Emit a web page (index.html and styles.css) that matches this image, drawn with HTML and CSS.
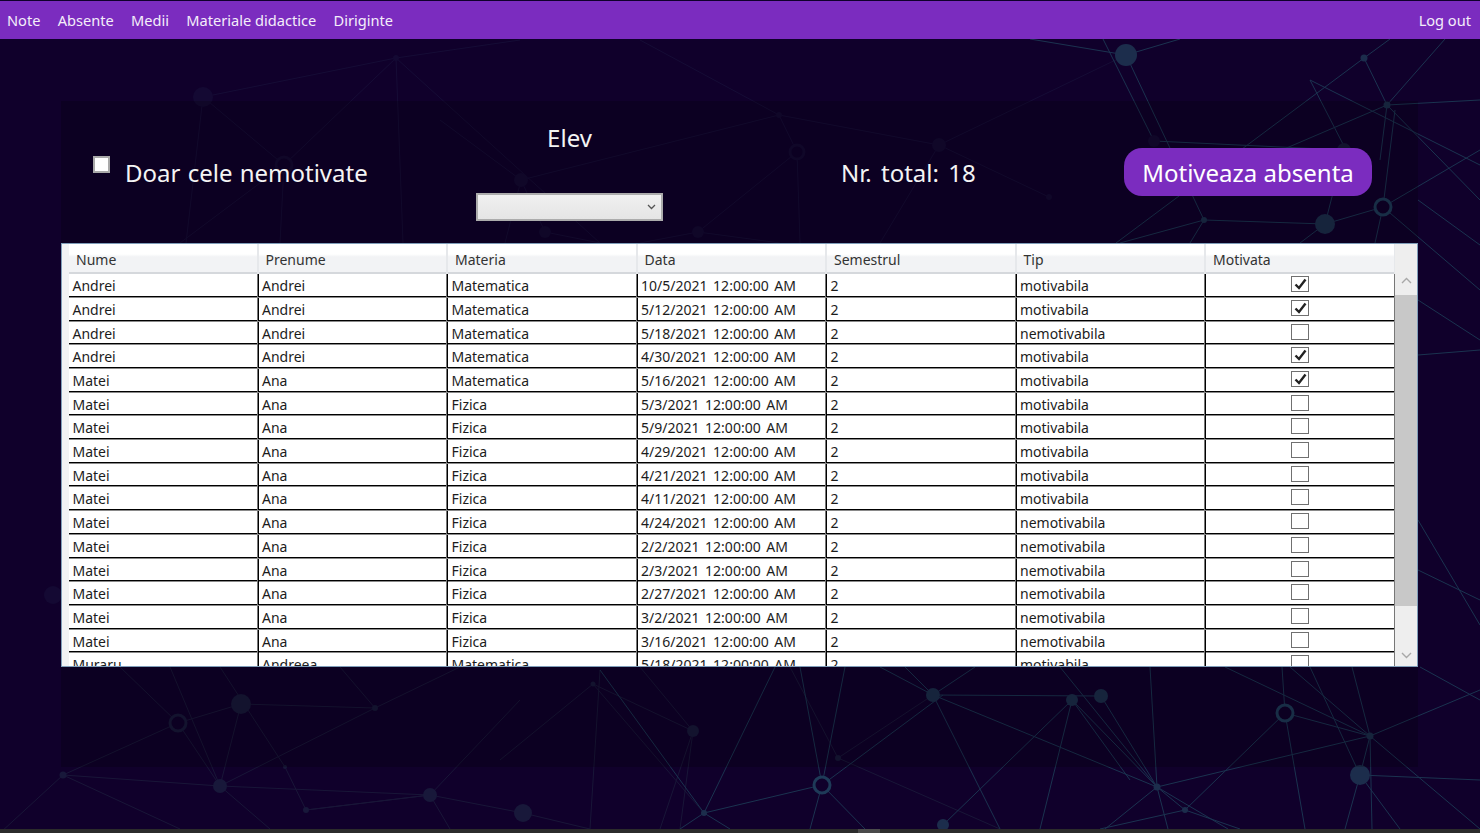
FILE: index.html
```html
<!DOCTYPE html>
<html lang="en">
  <head>
    <meta charset="UTF-8" />
    <meta name="viewport" content="width=device-width, initial-scale=1.0" />
    <title>Absente</title>
    <link rel="stylesheet" href="styles.css">
  </head>
  <body>
    <!-- network picture behind the page -->
    <svg class="network" width="1480" height="833" viewBox="0 0 1480 833">
      <g class="links-faint">
        <path d="M396 58 L203 97 M396 58 L284 165 M396 58 L520 40 M203 97 L284 165 M203 97 L186 243 M396 58 L403 243 M396 58 L600 243 M284 165 L280 243 M284 165 L180 243"/>
        <path d="M779 115 L521 180 M779 115 L797 152 M779 115 L939 145 M779 115 L640 40 M797 152 L698 232 M797 152 L800 243 M521 180 L545 232 M521 180 L440 120 M521 180 L505 243 M698 232 L640 243 M698 232 L780 243 M545 232 L600 243 M939 145 L1049 197 M939 145 L1126 55 M939 145 L880 243"/>
      </g>
      <g class="links-dim">
        <path d="M178 723 L241 704 M178 723 L63 775 M178 723 L220 786 M241 704 L375 708 M241 704 L220 786 M375 708 L460 667 M375 708 L340 667 M220 786 L375 708 M220 786 L430 795 M63 775 L220 786 M63 775 L0 833 M63 775 L180 829 M220 786 L270 829 M220 786 L170 667 M430 795 L520 700 M430 795 L306 810 M430 795 L450 829 M285 767 L306 810 M285 767 L220 667 M306 810 L430 795 M120 667 L178 723"/>
        <path d="M593 684 L693 731 M593 684 L500 760 M693 731 L640 667 M693 731 L680 829 M693 731 L660 829 M704 813 L593 684 M523 813 L590 829 M523 813 L430 795 M600 670 L590 829 M838 758 L1000 829 M838 758 L933 695 M838 758 L790 667"/>
      </g>
      <g class="links">
        <path d="M1126 55 L1204 220 M1126 55 L1030 39 M1126 55 L1180 39 M1103 39 L1154 141 M1364 58 L1387 105 M1364 58 L1116 243 M1364 58 L1390 39 M1387 105 L1445 39 M1387 105 L1480 100 M1387 105 L1380 160 M1387 105 L1200 185 M1387 105 L1480 200 M1310 80 L1480 165 M1310 80 L1345 148 M1154 141 L1344 150 M1204 220 L1325 224 M1204 220 L1120 243 M1204 220 L1190 243 M1325 224 L1383 207 M1325 224 L1300 243 M1325 224 L1344 150 M1383 207 L1480 150 M1383 207 L1480 290 M1383 207 L1375 243 M1383 207 L1395 110 M1418 200 L1480 245 M1418 300 L1480 340 M1418 355 L1480 350 M1418 570 L1480 600 M1418 520 L1480 625"/>
        <path d="M1157 787 L1370 736 M1157 787 L1101 696 M1157 787 L1072 700 M1157 787 L1150 667 M1157 787 L1105 829 M1157 787 L1168 829 M1157 787 L1228 829 M1157 787 L1185 810 M1157 787 L1060 667 M1185 810 L1285 713 M1185 810 L1100 829 M1185 810 L1240 829 M1285 713 L1370 736 M1285 713 L1305 829 M1285 713 L1282 667 M1370 736 L1225 667 M1370 736 L1480 690 M1370 736 L1290 667 M1370 736 L1372 829 M1370 736 L1480 829 M1370 736 L1360 775 M1370 736 L1352 667 M1360 775 L1480 780 M1360 775 L1345 829 M1360 775 L1400 829 M1360 775 L1310 667 M1420 667 L1480 700"/>
        <path d="M822 785 L704 813 M822 785 L943 695 M822 785 L800 667 M822 785 L845 667 M822 785 L865 829 M822 785 L810 829 M704 813 L775 667 M704 813 L600 670 M704 813 L730 829 M704 813 L680 829 M933 695 L1101 696 M933 695 L1157 787 M933 695 L1000 829 M933 695 L880 667 M1072 700 L943 825 M1072 700 L1040 829 M1072 700 L1130 780 M933 695 L905 667 M933 695 L975 667"/>
      </g>
      <g class="nodes-faint">
        <circle cx="396" cy="58" r="3"/><circle cx="203" cy="97" r="10"/><circle cx="779" cy="115" r="3"/><circle cx="521" cy="180" r="7"/><circle cx="545" cy="232" r="6"/><circle cx="698" cy="232" r="6"/><circle cx="939" cy="145" r="7"/><circle cx="1049" cy="197" r="3"/><circle cx="1154" cy="141" r="6"/><circle cx="53" cy="595" r="9"/>
        <circle class="ring" cx="284" cy="165" r="8"/><circle class="ring" cx="797" cy="152" r="7"/>
      </g>
      <g class="nodes-dim">
        <circle cx="1344" cy="150" r="7"/><circle cx="241" cy="704" r="10"/><circle cx="375" cy="708" r="3"/><circle cx="285" cy="767" r="2"/><circle cx="220" cy="786" r="7"/><circle cx="430" cy="795" r="7"/><circle cx="63" cy="775" r="3.5"/><circle cx="306" cy="810" r="3"/><circle cx="693" cy="731" r="6"/><circle cx="523" cy="813" r="9"/><circle cx="593" cy="684" r="2.5"/><circle cx="838" cy="758" r="3"/>
        <circle class="ring" cx="178" cy="723" r="8"/>
      </g>
      <g class="nodes">
        <circle cx="1126" cy="55" r="11"/><circle cx="1364" cy="58" r="3.5"/><circle cx="1387" cy="105" r="3.5"/><circle cx="1325" cy="224" r="10"/><circle cx="1204" cy="220" r="3"/><circle cx="933" cy="695" r="7"/><circle cx="1072" cy="700" r="6"/><circle cx="1101" cy="696" r="7"/><circle cx="1370" cy="736" r="3.5"/><circle cx="1360" cy="775" r="10"/><circle cx="1157" cy="787" r="3.5"/><circle cx="1185" cy="810" r="3"/><circle cx="704" cy="813" r="3"/><circle cx="943" cy="825" r="6"/>
        <circle class="ring" cx="822" cy="785" r="8"/><circle class="ring" cx="1285" cy="713" r="8"/><circle class="ring" cx="1383" cy="207" r="8"/>
      </g>
    </svg>

    <nav class="navbar">
      <a href="#">Note</a>
      <a href="#">Absente</a>
      <a href="#">Medii</a>
      <a href="#">Materiale didactice</a>
      <a href="#">Diriginte</a>
      <a href="#" class="logout">Log out</a>
    </nav>

    <main class="panel">
      <div class="toolbar">
        <label class="filter">
          <input type="checkbox" />
          <span>Doar cele nemotivate</span>
        </label>
        <div class="student">
          <span>Elev</span>
          <div class="combo">
            <svg width="9" height="6" viewBox="0 0 9 6"><path d="M1 1 L4.5 4.5 L8 1" fill="none" stroke="#555" stroke-width="1.3"/></svg>
          </div>
        </div>
        <div class="total">Nr. total: 18</div>
        <button class="motivate">Motiveaza absenta</button>
      </div>

      <div class="grid">
        <div class="grid-body">
          <div class="grid-head">
            <div>Nume</div><div>Prenume</div><div>Materia</div><div>Data</div><div>Semestrul</div><div>Tip</div><div>Motivata</div>
          </div>
          <div class="row"><div>Andrei</div><div>Andrei</div><div>Matematica</div><div>10/5/2021 12:00:00 AM</div><div>2</div><div>motivabila</div><div class="center"><span class="box"><svg width="13" height="12" viewBox="0 0 13 12"><path d="M1.5 6.5 L5 10 L11.5 1.5" fill="none" stroke="#222" stroke-width="2.4"/></svg></span></div></div>
          <div class="row"><div>Andrei</div><div>Andrei</div><div>Matematica</div><div>5/12/2021 12:00:00 AM</div><div>2</div><div>motivabila</div><div class="center"><span class="box"><svg width="13" height="12" viewBox="0 0 13 12"><path d="M1.5 6.5 L5 10 L11.5 1.5" fill="none" stroke="#222" stroke-width="2.4"/></svg></span></div></div>
          <div class="row"><div>Andrei</div><div>Andrei</div><div>Matematica</div><div>5/18/2021 12:00:00 AM</div><div>2</div><div>nemotivabila</div><div class="center"><span class="box"></span></div></div>
          <div class="row"><div>Andrei</div><div>Andrei</div><div>Matematica</div><div>4/30/2021 12:00:00 AM</div><div>2</div><div>motivabila</div><div class="center"><span class="box"><svg width="13" height="12" viewBox="0 0 13 12"><path d="M1.5 6.5 L5 10 L11.5 1.5" fill="none" stroke="#222" stroke-width="2.4"/></svg></span></div></div>
          <div class="row"><div>Matei</div><div>Ana</div><div>Matematica</div><div>5/16/2021 12:00:00 AM</div><div>2</div><div>motivabila</div><div class="center"><span class="box"><svg width="13" height="12" viewBox="0 0 13 12"><path d="M1.5 6.5 L5 10 L11.5 1.5" fill="none" stroke="#222" stroke-width="2.4"/></svg></span></div></div>
          <div class="row"><div>Matei</div><div>Ana</div><div>Fizica</div><div>5/3/2021 12:00:00 AM</div><div>2</div><div>motivabila</div><div class="center"><span class="box"></span></div></div>
          <div class="row"><div>Matei</div><div>Ana</div><div>Fizica</div><div>5/9/2021 12:00:00 AM</div><div>2</div><div>motivabila</div><div class="center"><span class="box"></span></div></div>
          <div class="row"><div>Matei</div><div>Ana</div><div>Fizica</div><div>4/29/2021 12:00:00 AM</div><div>2</div><div>motivabila</div><div class="center"><span class="box"></span></div></div>
          <div class="row"><div>Matei</div><div>Ana</div><div>Fizica</div><div>4/21/2021 12:00:00 AM</div><div>2</div><div>motivabila</div><div class="center"><span class="box"></span></div></div>
          <div class="row"><div>Matei</div><div>Ana</div><div>Fizica</div><div>4/11/2021 12:00:00 AM</div><div>2</div><div>motivabila</div><div class="center"><span class="box"></span></div></div>
          <div class="row"><div>Matei</div><div>Ana</div><div>Fizica</div><div>4/24/2021 12:00:00 AM</div><div>2</div><div>nemotivabila</div><div class="center"><span class="box"></span></div></div>
          <div class="row"><div>Matei</div><div>Ana</div><div>Fizica</div><div>2/2/2021 12:00:00 AM</div><div>2</div><div>nemotivabila</div><div class="center"><span class="box"></span></div></div>
          <div class="row"><div>Matei</div><div>Ana</div><div>Fizica</div><div>2/3/2021 12:00:00 AM</div><div>2</div><div>nemotivabila</div><div class="center"><span class="box"></span></div></div>
          <div class="row"><div>Matei</div><div>Ana</div><div>Fizica</div><div>2/27/2021 12:00:00 AM</div><div>2</div><div>nemotivabila</div><div class="center"><span class="box"></span></div></div>
          <div class="row"><div>Matei</div><div>Ana</div><div>Fizica</div><div>3/2/2021 12:00:00 AM</div><div>2</div><div>nemotivabila</div><div class="center"><span class="box"></span></div></div>
          <div class="row"><div>Matei</div><div>Ana</div><div>Fizica</div><div>3/16/2021 12:00:00 AM</div><div>2</div><div>nemotivabila</div><div class="center"><span class="box"></span></div></div>
          <div class="row"><div>Muraru</div><div>Andreea</div><div>Matematica</div><div>5/18/2021 12:00:00 AM</div><div>2</div><div>motivabila</div><div class="center"><span class="box"></span></div></div>
        </div>
        <div class="scrollbar">
          <div class="scroll-corner"></div>
          <div class="arrow"><svg width="11" height="7" viewBox="0 0 11 7"><path d="M1 6 L5.5 1.5 L10 6" fill="none" stroke="#a8a8a8" stroke-width="1.4"/></svg></div>
          <div class="thumb"></div>
          <div class="track"></div>
          <div class="arrow"><svg width="11" height="7" viewBox="0 0 11 7"><path d="M1 1 L5.5 5.5 L10 1" fill="none" stroke="#a8a8a8" stroke-width="1.4"/></svg></div>
        </div>
      </div>
    </main>

    <div class="taskbar"><span></span></div>
  </body>
</html>
```

FILE: styles.css
```css
html, body {
  margin: 0;
  height: 100%;
}

body {
  position: relative;
  width: 1480px;
  height: 833px;
  overflow: hidden;
  background-color: #10002b;
  font-family: "Noto Sans", Arial, sans-serif;
}

/* background picture */
.network {
  position: absolute;
  top: 0;
  left: 0;
}

.links, .links-dim, .links-faint {
  fill: none;
  stroke-width: 1;
}

.links path {
  stroke: #1b3350;
}

.links-dim path {
  stroke: #191638;
}

.links-faint path {
  stroke: #160c36;
}

.nodes circle {
  fill: #1c2d4c;
}

.nodes-dim circle {
  fill: #18183a;
}

.nodes-faint circle {
  fill: #140933;
}

.nodes .ring, .nodes-dim .ring, .nodes-faint .ring {
  fill: #10002b;
  stroke-width: 3;
}

.nodes .ring {
  stroke: #1e3a58;
}

.nodes-dim .ring {
  stroke: #18183a;
}

.nodes-faint .ring {
  stroke: #140933;
}

.navbar {
  position: relative;
  display: flex;
  align-items: center;
  gap: 17.3px;
  height: 38px;
  margin-top: 1px;
  padding: 0 9px 0 7px;
  background-color: #7b2cbf;
}

.navbar a {
  color: #f4eefa;
  font-size: 14.6px;
  text-decoration: none;
}

.navbar .logout {
  margin-left: auto;
}

.panel {
  position: relative;
  width: 1357px;
  height: 666px;
  margin: 62px 0 0 61px;
  background-color: rgba(0, 0, 0, 0.2);
}

.toolbar {
  display: flex;
  align-items: center;
  height: 142px;
  padding: 0 46px 0 32px;
  color: #f4f4f4;
}

.filter {
  display: flex;
  width: 383px;
  font-size: 24px;
  word-spacing: 1px;
}

.filter input {
  appearance: none;
  width: 17px;
  height: 17px;
  margin: 0 15px 0 0;
  background-color: #fff;
  border: 2px solid #a9a9a9;
  box-sizing: border-box;
}

.student {
  display: flex;
  flex-direction: column;
  align-items: center;
  gap: 39px;
  width: 187px;
  margin-top: -1px;
  font-size: 24px;
}

.student span {
  line-height: 32px;
}

.combo {
  display: flex;
  align-items: center;
  justify-content: flex-end;
  width: 100%;
  height: 28px;
  padding-right: 5px;
  box-sizing: border-box;
  background: linear-gradient(#f0f0f0, #e5e5e5);
  border: 2px solid #acacac;
}

.total {
  margin-left: 178px;
  font-size: 24px;
  word-spacing: 3px;
}

.motivate {
  width: 248px;
  height: 48px;
  margin-left: auto;
  padding: 0;
  color: #fff;
  background-color: #7b2cbf;
  border: none;
  border-radius: 18px;
  font-family: inherit;
  font-size: 24px;
}

.grid {
  display: flex;
  height: 424px;
  overflow: hidden;
  background-color: #fff;
  border: 1px solid #7f9db9;
  box-sizing: border-box;
}

.grid-body {
  flex: 1;
  overflow: hidden;
  padding-left: 7px;
  background: linear-gradient(#f1f2f4, #f1f2f4) left top / 7px 100% no-repeat;
}

.grid-head, .row {
  display: grid;
  grid-template-columns: repeat(7, 189.5px);
}

.grid-head {
  height: 30.3px;
  box-sizing: border-box;
  background: linear-gradient(#fff 0, #fff 36%, #f2f3f5 46%, #f2f3f5 100%);
  border-bottom: 2px solid #d5d8dc;
  color: #333;
  font-size: 14px;
  line-height: 31px;
}

.grid-head div {
  padding-left: 7px;
  border-right: 2px solid #e6e8eb;
}

.row {
  height: 23.7px;
  box-sizing: border-box;
  border-bottom: 1px solid #8a8a8a;
  box-shadow: inset 0 -1px #000;
  background-color: #fff;
  color: #1c1c1c;
  font-size: 14px;
  line-height: 23px;
  word-spacing: 2px;
}

.row div {
  padding-left: 3.5px;
  border-right: 1px solid #000;
  box-shadow: inset -1px 0 #777;
  white-space: nowrap;
}

.row .center {
  display: flex;
  justify-content: center;
  padding: 2px 0 0;
}

.box {
  display: flex;
  align-items: center;
  justify-content: center;
  width: 18px;
  height: 16px;
  box-sizing: border-box;
  background-color: #fff;
  border: 1px solid #707070;
}

.scrollbar {
  display: flex;
  flex-direction: column;
  width: 22px;
  background-color: #eeeeee;
}

.scroll-corner {
  height: 22px;
}

.arrow {
  display: flex;
  align-items: center;
  justify-content: center;
  height: 29px;
}

.scrollbar .arrow:last-child {
  height: 22px;
}

.thumb {
  height: 311px;
  background-color: #c8c8c8;
}

.track {
  flex: 1;
}

.taskbar {
  position: absolute;
  left: 0;
  right: 0;
  bottom: 0;
  height: 4px;
  background-color: #2b2b2b;
}

.taskbar span {
  display: block;
  width: 22px;
  height: 4px;
  margin-left: 858px;
  background-color: #4a4a4a;
}
```
